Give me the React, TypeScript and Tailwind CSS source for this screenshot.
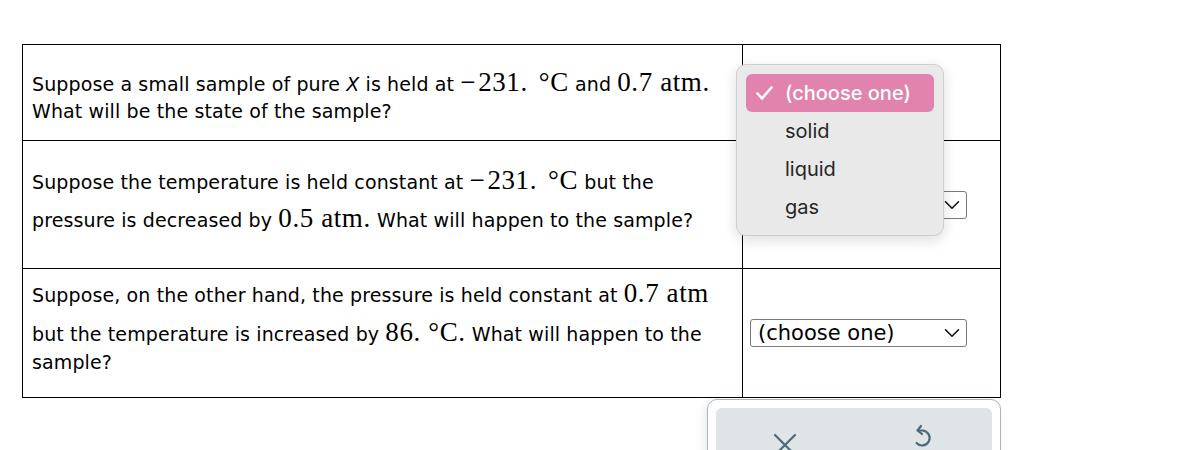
import type { ReactNode } from 'react'

function M({ children }: { children: ReactNode }) {
  return (
    <span className="font-['Liberation_Serif',serif] text-[27px] leading-[29px] tracking-[0.6px]">{children}</span>
  )
}

// "−231. °C" is set a little wider in the source
function Temp({ value }: { value: string }) {
  return (
    <M>
      <span className="mr-[2px]">−</span>
      {value}
      <span className="ml-[11px]">°C</span>
    </M>
  )
}

function Line({ children, className = '' }: { children: ReactNode; className?: string }) {
  return <div className={`h-[29px] whitespace-nowrap leading-[29px] ${className}`}>{children}</div>
}

function Chevron() {
  return (
    <svg width="16" height="10" viewBox="0 0 16 10" fill="none" className="shrink-0">
      <path d="M1.5 1.8l6.5 6.4 6.5-6.4" stroke="#111" strokeWidth="1.6" strokeLinecap="round" strokeLinejoin="round" />
    </svg>
  )
}

function Select() {
  return (
    <div className="flex h-[28px] w-[217px] items-center justify-between rounded-[3px] border border-[#7a7a7a] bg-white pl-[7px] pr-[6px] text-[21px] leading-none tracking-normal">
      <span>(choose one)</span>
      <Chevron />
    </div>
  )
}

function Popup() {
  const items = ['solid', 'liquid', 'gas']
  return (
    <div className="absolute left-[736px] top-[64px] w-[208px] rounded-[10px] border border-[#cdcdcd] bg-[#e9e9e9] px-[9px] py-[9px] font-['Inter',sans-serif] text-[20px] tracking-normal text-[#262626] shadow-[0_4px_14px_rgba(0,0,0,0.14)]">
      <div className="flex h-[38px] items-center rounded-[6px] bg-[#e283ae] pl-[9px] font-medium text-white">
        <svg width="19" height="16" viewBox="0 0 19 16" fill="none" className="mr-[11px]">
          <path d="M2.5 8.5l4.5 5L16.5 2.5" stroke="#fff" strokeWidth="2.6" strokeLinecap="round" strokeLinejoin="round" />
        </svg>
        <span>(choose one)</span>
      </div>
      {items.map((item) => (
        <div key={item} className="flex h-[38px] items-center pl-[39px]">
          {item}
        </div>
      ))}
    </div>
  )
}

export default function App() {
  return (
    <div className="relative min-h-[450px] bg-white pt-[44px] font-['DejaVu_Sans',sans-serif] text-[19px] tracking-[0.12px] text-black">
      <div className="ml-[22px] w-[979px] border border-black">
        <div className="flex h-[96px] border-b border-black">
          <div className="w-[720px] border-r border-black pl-[9px] pt-[15px]">
            <Line className="mt-[8px]">
              Suppose a small sample of pure <i>X</i> is held at <Temp value="231." /> and <M>0.7 atm.</M>
            </Line>
            <Line>What will be the state of the sample?</Line>
          </div>
          <div className="flex-1" />
        </div>
        <div className="flex h-[128px] border-b border-black">
          <div className="w-[720px] border-r border-black pl-[9px] pt-[17px]">
            <Line className="mt-[8px]">
              Suppose the temperature is held constant at <Temp value="231." /> but the
            </Line>
            <Line className="mt-[9px]">
              pressure is decreased by <M>0.5 atm.</M> What will happen to the sample?
            </Line>
          </div>
          <div className="flex flex-1 items-center pl-[7px]">
            <Select />
          </div>
        </div>
        <div className="flex h-[128px]">
          <div className="w-[720px] border-r border-black pl-[9px] pt-[2px]">
            <Line className="mt-[8px]">
              Suppose, on the other hand, the pressure is held constant at <M>0.7 atm</M>
            </Line>
            <Line className="mt-[10px]">
              but the temperature is increased by <M>86. °C.</M> What will happen to the
            </Line>
            <Line className="mt-[1px]">sample?</Line>
          </div>
          <div className="flex flex-1 items-center pl-[7px]">
            <Select />
          </div>
        </div>
      </div>

      <div className="ml-[707px] mt-[1px] w-[294px] rounded-[10px] border border-[#a9b7bd] bg-white p-[8px] shadow-[-3px_2px_8px_rgba(0,0,0,0.08)]">
        <div className="flex h-[64px] items-start justify-around rounded-[6px] bg-[#dfe4e6] pt-[16px]">
          <svg width="24" height="34" viewBox="0 0 24 34" fill="none">
            <path d="M2 11l20 20M22 11L2 31" stroke="#4b6b79" strokeWidth="2.2" strokeLinecap="round" />
          </svg>
          <svg width="24" height="30" viewBox="0 0 24 30" fill="none">
            <path d="M10 2L6.5 6.5 11 10" stroke="#4b6b79" strokeWidth="2.2" strokeLinecap="round" strokeLinejoin="round" />
            <path d="M7 6.5h4.5a7.5 7.5 0 1 1-6 12.5" stroke="#4b6b79" strokeWidth="2.2" strokeLinecap="round" />
          </svg>
        </div>
      </div>

      <Popup />
    </div>
  )
}
